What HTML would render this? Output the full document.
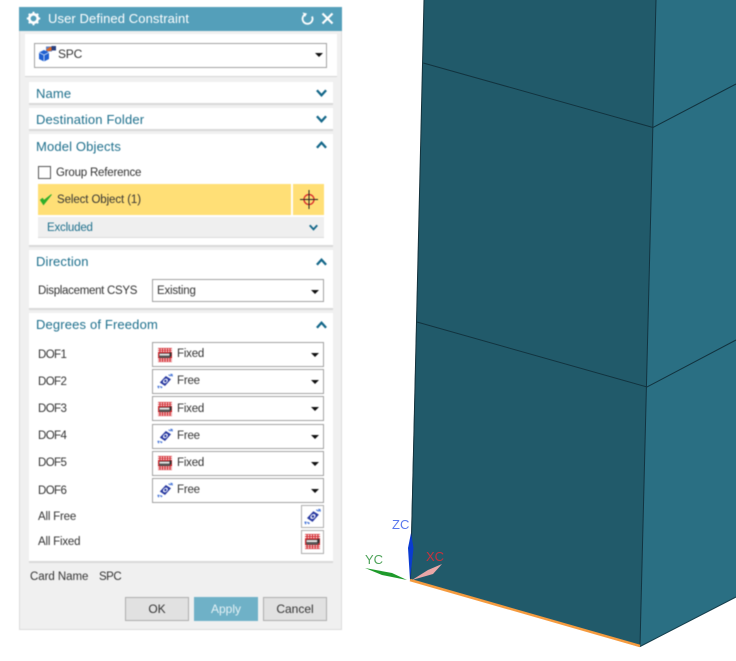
<!DOCTYPE html>
<html><head><meta charset="utf-8"><style>
html,body{margin:0;padding:0;background:#fff}
body{width:736px;height:661px;position:relative;overflow:hidden;font-family:"Liberation Sans",sans-serif;color:#333}
div,span,svg.a{position:absolute}
#dlg{filter:blur(.4px);left:0;top:0;width:736px;height:661px}
.p{background:#fff;left:29px;width:304px;border-bottom:2px solid #d9d9d9;box-sizing:border-box}
.h{left:36px;font-size:13px;line-height:16px;margin-top:1px;color:#1d6f8c;white-space:nowrap;letter-spacing:.15px}
.t{font-size:11.5px;line-height:14px;margin-top:1px;color:#333;white-space:nowrap;letter-spacing:-.2px}
.d{letter-spacing:-.6px}
.s{background:#fff;border:1px solid #a2a2a2;box-sizing:border-box;left:152px;width:172px;height:25px}
.s:after{content:"";position:absolute;right:4px;top:10px;border:4.500px solid transparent;border-top:4px solid #111;border-bottom:0}
.b{background:#e1e1e1;border:1px solid #adadad;box-sizing:border-box;width:64px;height:24px;top:597px;text-align:center;font-size:12px;line-height:23px;color:#333}
</style></head><body>
<svg width="0" height="0" style="position:absolute"><defs>
<symbol id="fx" viewBox="0 0 14 14"><rect width="14" height="14" fill="#d3252c"/><path d="M0 1.300h14M0 3.300h14M0 11h14M0 12.800h14" stroke="#fff" stroke-width="1.100" stroke-dasharray="1.500 1"/><rect x="1" y="5" width="11.500" height="5" rx="1.500" fill="#555"/><rect x="1.500" y="5.800" width="10" height="1.700" fill="#eee"/><rect x="11.500" y="4.500" width="2" height="4" fill="#333"/></symbol>
<symbol id="fr" viewBox="0 0 16 16"><path d="M.8 14.500l1.500-1.500M.8 12.800l1 2.500M4 15l1.200-1.200M3 13.500l2 .8M11.500 1.800l1.500.8M13.500 1l1.500 1M15 1l.3 2.500M13 3l1.500-.8" stroke="#4a78d8" stroke-width="1.100" fill="none"/><path d="M2.800 9.500L8.800 3l5.200 3.200-6 6.800z" fill="#26379f"/><ellipse cx="8.400" cy="8" rx="2.800" ry="2" fill="#eef0fa" transform="rotate(-40 8.400 8)"/><circle cx="8.400" cy="8" r="1.200" fill="#26379f"/></symbol>
<symbol id="chd" viewBox="0 0 12 8"><path d="M1 1l5 5.500 5-5.500" fill="none" stroke="#15688a" stroke-width="2.500"/></symbol>
<symbol id="chu" viewBox="0 0 12 8"><path d="M1 7l5-5.500 5 5.500" fill="none" stroke="#15688a" stroke-width="2.500"/></symbol>
</defs></svg>

<!-- 3D model -->
<svg class="a" style="left:0;top:0" width="736" height="661" viewBox="0 0 736 661">
<polygon points="424,0 656,0 640,647 410,580" fill="#215a6a"/>
<polygon points="656,0 736,0 736,597 640,647" fill="#2a6f83"/>
<path d="M423.300 63L653 127.500L736 84M417 322L647 387L736 340" fill="none" stroke="#12333f" stroke-width="1"/>
<path d="M656 0L640 646" stroke="#123340" stroke-width="1"/>
<path d="M424 0L410.500 580" stroke="#14323c" stroke-width="1"/>
<path d="M640 646.500L736 597" stroke="#163f4d" stroke-width="1"/>
<path d="M410 580L640 646" stroke="#f59b3f" stroke-width="2.500"/>
<path d="M410 580L408 548L411 533L413.500 548Z" fill="#0a3bd1"/>
<path d="M365 568L392 573L407 580L382 575Z" fill="#1e9a2a"/>
<path d="M412 580L428 570L442 564L433 574Z" fill="#eaa7a7"/>
<text x="392" y="529" font-family="Liberation Sans" font-size="13" fill="#5a78ee">ZC</text>
<text x="365" y="564" font-family="Liberation Sans" font-size="13" fill="#4fa35a">YC</text>
<text x="426" y="561" font-family="Liberation Sans" font-size="13" fill="#c8323c">XC</text>
</svg>

<div id="dlg">
<div style="left:19px;top:7px;width:323px;height:623px;background:#f0f0f0;border:1px solid #dcdcdc;border-top:0;box-sizing:border-box"></div>
<div style="left:19px;top:7px;width:323px;height:24px;background:#549fba"></div>
<svg class="a" style="left:26px;top:11px" width="15" height="15" viewBox="0 0 15 15"><circle cx="7.500" cy="7.500" r="4.200" fill="none" stroke="#fff" stroke-width="2.600"/><path d="M7.500 .8v2.500M7.500 11.700v2.500M.8 7.500h2.500M11.700 7.500h2.500M2.800 2.800l1.700 1.700M10.500 10.500l1.700 1.700M2.800 12.200l1.700-1.700M10.500 4.500l1.700-1.700" stroke="#fff" stroke-width="2"/></svg>
<div style="left:48px;top:11px;font-size:13px;line-height:16px;color:#fff;white-space:nowrap;letter-spacing:.1px">User Defined Constraint</div>
<svg class="a" style="left:300px;top:11px" width="15" height="15" viewBox="0 0 15 15"><path d="M5 3.500A5 5 0 1 0 12 5.500" fill="none" stroke="#fff" stroke-width="1.800"/><path d="M2.500 1.500L7 2.500L5 6z" fill="#fff"/></svg>
<svg class="a" style="left:321px;top:12px" width="13" height="13" viewBox="0 0 13 13"><path d="M1.500 1.500l10 10M11.500 1.500l-10 10" stroke="#fff" stroke-width="2.200"/></svg>

<div style="left:25px;top:34px;width:312px;height:43px;background:#fff;border-bottom:1px solid #d6d6d6;box-sizing:border-box"></div>
<div style="left:34px;top:43px;width:293px;height:25px;background:#fff;border:1px solid #a2a2a2;box-sizing:border-box"></div>
<svg class="a" style="left:38px;top:45px" width="19" height="17" viewBox="0 0 19 17"><rect x="8" y="1.500" width="6" height="5" fill="#5f7fc0"/><path d="M8 5l4-3 3 .5-1 3-4 .5z" fill="#e4661e"/><rect x="13.500" y="1" width="4.500" height="4.500" fill="#27407f"/><path d="M1 7.500l5-2.500 5 2.500v6.500l-5 2.500-5-2.500z" fill="#1f5fd0"/><path d="M1 7.500l5 2.500 5-2.500M6 10v6.500" stroke="#c4d8f6" stroke-width=".9" fill="none"/></svg>
<div class="t" style="left:58px;top:46px;font-size:12px">SPC</div>
<div style="left:315px;top:53px;border:4.500px solid transparent;border-top:4px solid #111;border-bottom:0"></div>

<div class="p" style="top:82px;height:23px"></div><div class="h" style="top:85px">Name</div>
<svg class="a" style="left:316px;top:89px" width="11" height="8"><use href="#chd"/></svg>
<div class="p" style="top:108px;height:23px"></div><div class="h" style="top:111px">Destination Folder</div>
<svg class="a" style="left:316px;top:115px" width="11" height="8"><use href="#chd"/></svg>

<div class="p" style="top:134px;height:113px"></div><div class="h" style="top:138px">Model Objects</div>
<svg class="a" style="left:316px;top:141px" width="11" height="8"><use href="#chu"/></svg>
<div style="left:38px;top:166px;width:13px;height:13px;background:#fff;border:1px solid #555;box-sizing:border-box"></div>
<div class="t" style="left:56px;top:165px">Group Reference</div>
<div style="left:38px;top:184px;width:253px;height:31px;background:#ffdf76"></div>
<div style="left:293px;top:184px;width:31px;height:31px;background:#ffdf76"></div>
<svg class="a" style="left:40px;top:193px" width="12" height="13" viewBox="0 0 12 13"><path d="M.5 7l3 4.500L11.500 1.500 4 7.500 2.500 5.500z" fill="#2fae2a" stroke="#2fae2a"/></svg>
<div class="t" style="left:57px;top:192px;letter-spacing:-.1px">Select Object (1)</div>
<svg class="a" style="left:299px;top:189px" width="20" height="21" viewBox="0 0 20 21"><circle cx="10" cy="10.500" r="5" fill="none" stroke="#d8242a" stroke-width="1.300"/><path d="M10 1v19M1 10.500h18" stroke="#222" stroke-width="1"/></svg>
<div style="left:38px;top:217px;width:286px;height:21px;background:#efefef;border-bottom:1px solid #dcdcdc;box-sizing:border-box"></div>
<div class="t" style="left:47px;top:220px;color:#1d6f8c">Excluded</div>
<svg class="a" style="left:309px;top:224px" width="9" height="7"><use href="#chd"/></svg>

<div class="p" style="top:250px;height:60px"></div><div class="h" style="top:253px">Direction</div>
<svg class="a" style="left:316px;top:258px" width="11" height="8"><use href="#chu"/></svg>
<div class="t" style="left:38px;top:283px;letter-spacing:-.3px">Displacement CSYS</div>
<div class="s" style="top:279px;height:23px"></div>
<div class="t" style="left:157px;top:283px">Existing</div>

<div class="p" style="top:313px;height:250px"></div><div class="h" style="top:316px">Degrees of Freedom</div>
<svg class="a" style="left:316px;top:321px" width="11" height="8"><use href="#chu"/></svg>

<div class="t d" style="left:38px;top:347px">DOF1</div>
<div class="s" style="top:342px"></div><svg class="a" style="left:158px;top:348px" width="14" height="14"><use href="#fx"/></svg><div class="t" style="left:177px;top:346px">Fixed</div>
<div class="t d" style="left:38px;top:374px">DOF2</div>
<div class="s" style="top:369px"></div><svg class="a" style="left:157px;top:373px" width="16" height="16"><use href="#fr"/></svg><div class="t" style="left:177px;top:373px">Free</div>
<div class="t d" style="left:38px;top:401px">DOF3</div>
<div class="s" style="top:396px"></div><svg class="a" style="left:158px;top:402px" width="14" height="14"><use href="#fx"/></svg><div class="t" style="left:177px;top:401px">Fixed</div>
<div class="t d" style="left:38px;top:428px">DOF4</div>
<div class="s" style="top:424px"></div><svg class="a" style="left:157px;top:428px" width="16" height="16"><use href="#fr"/></svg><div class="t" style="left:177px;top:428px">Free</div>
<div class="t d" style="left:38px;top:455px">DOF5</div>
<div class="s" style="top:451px"></div><svg class="a" style="left:158px;top:456px" width="14" height="14"><use href="#fx"/></svg><div class="t" style="left:177px;top:455px">Fixed</div>
<div class="t d" style="left:38px;top:483px">DOF6</div>
<div class="s" style="top:478px"></div><svg class="a" style="left:157px;top:482px" width="16" height="16"><use href="#fr"/></svg><div class="t" style="left:177px;top:482px">Free</div>

<div class="t" style="left:38px;top:509px">All Free</div>
<div style="left:301px;top:505px;width:23px;height:23px;background:#fff;border:1px solid #adadad;box-sizing:border-box"></div>
<svg class="a" style="left:304px;top:508px" width="17" height="17"><use href="#fr"/></svg>
<div class="t" style="left:38px;top:534px">All Fixed</div>
<div style="left:301px;top:530px;width:23px;height:24px;background:#fff;border:1px solid #adadad;box-sizing:border-box"></div>
<svg class="a" style="left:305px;top:534px" width="15" height="15"><use href="#fx"/></svg>

<div class="t" style="left:30px;top:569px;letter-spacing:-.05px">Card Name</div>
<div class="t" style="left:99px;top:569px;letter-spacing:-.5px">SPC</div>

<div class="b" style="left:125px">OK</div>
<div class="b" style="left:194px;background:#6fb1c7;border-color:#6fb1c7;color:#e6f2f6">Apply</div>
<div class="b" style="left:263px">Cancel</div>
</div>
</body></html>
